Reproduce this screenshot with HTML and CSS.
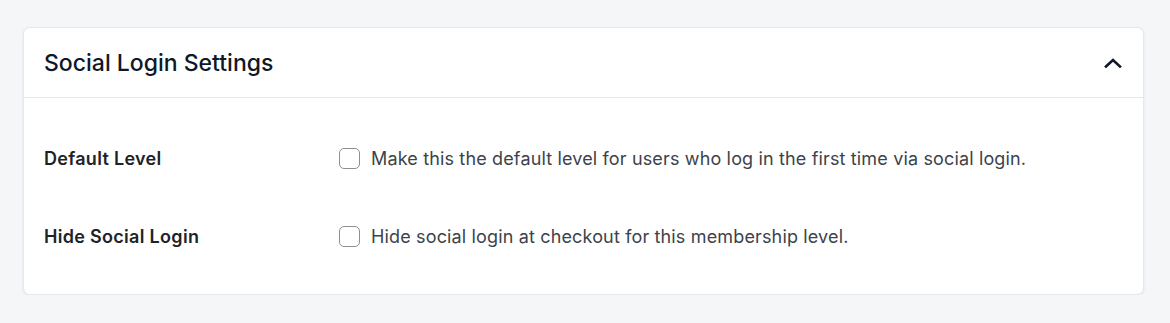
FILE: index.html
```html
<!DOCTYPE html>
<html lang="en">
<head>
<meta charset="utf-8">
<link rel="stylesheet" href="styles.css">
</head>
<body>
<section class="card">
  <header class="card-head">
    <h2 class="card-title">Social Login Settings</h2>
    <button class="toggle" aria-label="Collapse">
      <svg width="18" height="10" viewBox="0 0 18 10"><path d="M2 8.5 L9 2 L16 8.5" fill="none" stroke="#101828" stroke-width="2.6" stroke-linecap="square" stroke-linejoin="miter"/></svg>
    </button>
  </header>
  <div class="card-body">
    <div class="row">
      <div class="label">Default Level</div>
      <label class="field"><span class="box"></span><span class="desc">Make this the default level for users who log in the first time via social login.</span></label>
    </div>
    <div class="row">
      <div class="label">Hide Social Login</div>
      <label class="field"><span class="box"></span><span class="desc">Hide social login at checkout for this membership level.</span></label>
    </div>
  </div>
</section>
</body>
</html>
```
FILE: styles.css
```css
html, body {
  margin: 0;
  padding: 0;
}
body {
  background: #f5f6f8;
  font-family: Inter, "Noto Sans", sans-serif;
  padding: 27px 26px 0 23px;
}
.card {
  background: #fff;
  border: 1px solid #e6e8ec;
  border-radius: 7px;
  box-shadow: 0 1px 3px rgba(16, 24, 40, 0.08);
  width: 1119px;
}
.card-head {
  display: flex;
  align-items: center;
  justify-content: space-between;
  height: 69px;
  padding: 0 20px;
  border-bottom: 1px solid #e4e6ea;
}
.card-title {
  margin: 0;
  font-size: 23px;
  font-weight: 500;
  color: #101828;
}
.toggle {
  border: 0;
  background: none;
  padding: 0;
  margin-right: 1px;
  display: flex;
}
.card-body {
  padding: 21px 20px 19px;
}
.row {
  display: grid;
  grid-template-columns: 295px 1fr;
  align-items: center;
  height: 78px;
}
.label {
  font-size: 18px;
  font-weight: 600;
  letter-spacing: 0.3px;
  color: #1d2327;
}
.field {
  display: flex;
  align-items: center;
  gap: 11px;
}
.box {
  width: 19px;
  height: 19px;
  border: 1px solid #8c8f94;
  border-radius: 5px;
  background: #fff;
  flex: none;
}
.desc {
  font-size: 18px;
  letter-spacing: 0.15px;
  color: #3c434a;
}
```
